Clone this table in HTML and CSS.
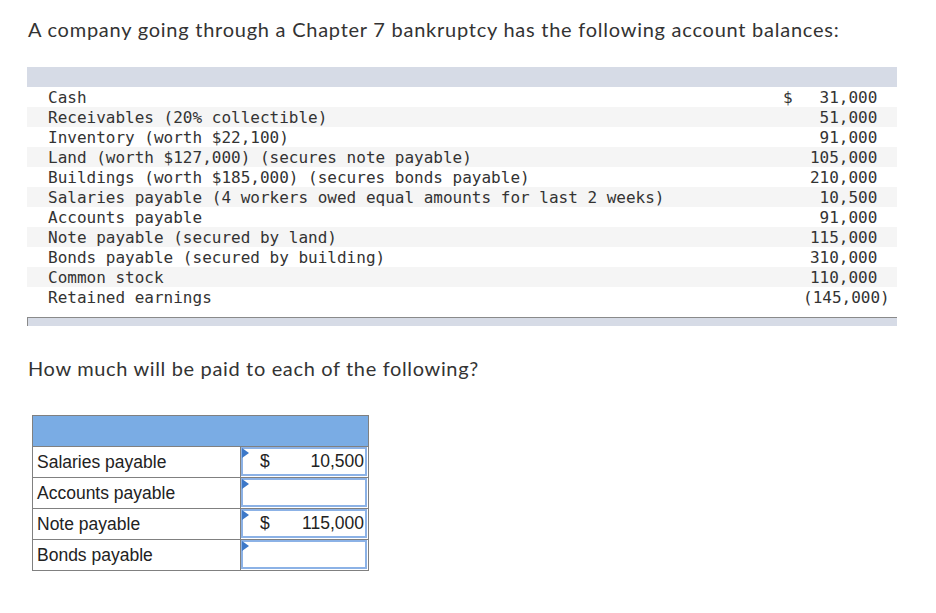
FILE: index.html
```html
<!DOCTYPE html>
<html>
<head>
<meta charset="utf-8">
<link rel="stylesheet" href="styles.css">
</head>
<body>
<div class="page">
  <p class="prompt">A company going through a Chapter 7 bankruptcy has the following account balances:</p>

  <div class="balances">
    <div class="bal-head"></div>
    <div class="bal-row"><span class="lbl">Cash</span><span class="cur">$</span><span class="amt">31,000<span class="hang">)</span></span></div>
    <div class="bal-row alt"><span class="lbl">Receivables (20% collectible)</span><span class="cur"></span><span class="amt">51,000<span class="hang">)</span></span></div>
    <div class="bal-row"><span class="lbl">Inventory (worth $22,100)</span><span class="cur"></span><span class="amt">91,000<span class="hang">)</span></span></div>
    <div class="bal-row alt"><span class="lbl">Land (worth $127,000) (secures note payable)</span><span class="cur"></span><span class="amt">105,000<span class="hang">)</span></span></div>
    <div class="bal-row"><span class="lbl">Buildings (worth $185,000) (secures bonds payable)</span><span class="cur"></span><span class="amt">210,000<span class="hang">)</span></span></div>
    <div class="bal-row alt"><span class="lbl">Salaries payable (4 workers owed equal amounts for last 2 weeks)</span><span class="cur"></span><span class="amt">10,500<span class="hang">)</span></span></div>
    <div class="bal-row"><span class="lbl">Accounts payable</span><span class="cur"></span><span class="amt">91,000<span class="hang">)</span></span></div>
    <div class="bal-row alt"><span class="lbl">Note payable (secured by land)</span><span class="cur"></span><span class="amt">115,000<span class="hang">)</span></span></div>
    <div class="bal-row"><span class="lbl">Bonds payable (secured by building)</span><span class="cur"></span><span class="amt">310,000<span class="hang">)</span></span></div>
    <div class="bal-row alt"><span class="lbl">Common stock</span><span class="cur"></span><span class="amt">110,000<span class="hang">)</span></span></div>
    <div class="bal-row"><span class="lbl">Retained earnings</span><span class="cur"></span><span class="amt">(145,000)</span></div>
    <div class="bal-foot"></div>
  </div>

  <p class="prompt question">How much will be paid to each of the following?</p>

  <table class="answers">
    <tr><th colspan="2" class="ans-head"></th></tr>
    <tr>
      <td class="ans-lbl">Salaries payable</td>
      <td class="ans-cell"><div class="ans-input"><span class="ans-cur">$</span><span class="ans-val">10,500</span></div></td>
    </tr>
    <tr>
      <td class="ans-lbl">Accounts payable</td>
      <td class="ans-cell"><div class="ans-input"></div></td>
    </tr>
    <tr>
      <td class="ans-lbl">Note payable</td>
      <td class="ans-cell"><div class="ans-input"><span class="ans-cur">$</span><span class="ans-val">115,000</span></div></td>
    </tr>
    <tr>
      <td class="ans-lbl">Bonds payable</td>
      <td class="ans-cell"><div class="ans-input"></div></td>
    </tr>
  </table>
</div>
</body>
</html>
```

FILE: styles.css
```css
html, body {
  margin: 0;
  padding: 0;
  background: #ffffff;
}

.page {
  padding: 17px 0 0 0;
}

.prompt {
  margin: 0 0 0 28px;
  font-family: Lato, "Open Sans", sans-serif;
  font-size: 20px;
  line-height: 24px;
  letter-spacing: 0.75px;
  color: #333333;
}

.balances {
  margin: 26px 0 0 27px;
  width: 870px;
  font-family: "DejaVu Sans Mono", "Liberation Mono", monospace;
  font-size: 16px;
  color: #333333;
}

.bal-head {
  height: 20px;
  background: #d6dbe6;
}

.bal-row {
  display: flex;
  height: 20px;
  line-height: 21px;
  padding-left: 21px;
  padding-right: 10px;
  white-space: pre;
  background: #ffffff;
}

.bal-row.alt {
  background: #f5f5f5;
}

.lbl {
  flex: 1;
}

.cur {
  width: 20px;
}

.amt {
  width: 84px;
  text-align: right;
}

.hang {
  visibility: hidden;
}

.bal-foot {
  margin-top: 10px;
  height: 8px;
  background: #d6dbe6;
  border-top: 1px solid #8a8a8a;
  border-left: 1px solid #8a8a8a;
}

.question {
  margin-top: 30px;
  letter-spacing: 0.65px;
}

.answers {
  margin: 35px 0 0 32px;
  border-collapse: collapse;
  font-family: "Liberation Sans", Arial, sans-serif;
  font-size: 17.5px;
  color: #222222;
}

.answers td, .answers th {
  border: 1px solid #808080;
  padding: 0;
}

.ans-head {
  height: 30px;
  background: #7aace4;
}

.ans-lbl {
  width: 203px;
  height: 30px;
  padding-left: 4px !important;
}

.ans-cell {
  width: 127px;
  height: 30px;
  vertical-align: top;
}

.ans-input {
  position: relative;
  box-sizing: border-box;
  height: 29px;
  margin: 0 1px 0 0;
  border: 2px solid #8cb2e6;
  display: flex;
  align-items: center;
  padding-right: 1px;
}

.ans-input::before {
  content: "";
  position: absolute;
  left: -1px;
  top: -1px;
  width: 0;
  height: 0;
  border-left: 7px solid #3c78c8;
  border-top: 5px solid transparent;
  border-bottom: 5px solid transparent;
}

.ans-cur {
  margin-left: 17px;
}

.ans-val {
  flex: 1;
  text-align: right;
}
```
